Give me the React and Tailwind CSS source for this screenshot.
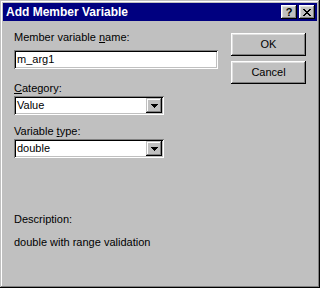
import React from "react";

const font = { fontFamily: '"Liberation Sans", Arial, sans-serif' };

function Combo({ value }) {
  return (
    <div className="relative flex h-[19px] w-[150px] items-center bg-white shadow-[inset_1px_1px_#808080,inset_-1px_-1px_#fff,inset_2px_2px_#000,inset_-2px_-2px_#c0c0c0]">
      <span className="pl-[3px] text-[11px] leading-[13px] text-black">{value}</span>
      <div className="absolute right-[2px] top-[2px] flex h-[15px] w-[16px] items-center justify-center bg-[#c0c0c0] shadow-[inset_-1px_-1px_#000,inset_1px_1px_#c0c0c0,inset_-2px_-2px_#808080,inset_2px_2px_#fff]">
        <svg width="7" height="4" viewBox="0 0 7 4" className="mt-[1px]">
          <path d="M0 0h7v1H0zM1 1h5v1H1zM2 2h3v1H2zM3 3h1v1H3z" fill="#000" />
        </svg>
      </div>
    </div>
  );
}

function Btn({ children }) {
  return (
    <div className="flex h-[23px] w-[75px] items-center justify-center bg-[#c0c0c0] text-[11px] text-black shadow-[inset_-1px_-1px_#000,inset_1px_1px_#fff,inset_-2px_-2px_#808080,inset_2px_2px_#dfdfdf]">
      {children}
    </div>
  );
}

export default function App() {
  return (
    <div
      style={font}
      className="flex h-[288px] w-[320px] flex-col bg-[#c0c0c0] p-[3px] shadow-[inset_-1px_-1px_#000,inset_1px_1px_#c0c0c0,inset_-2px_-2px_#808080,inset_2px_2px_#fff]"
    >
      <div className="flex h-[18px] items-center justify-between bg-[#000080] pl-[3px] pr-[2px]">
        <span className="text-[12px] font-bold leading-[13px] text-white">Add Member Variable</span>
        <div className="flex items-center">
          <div className="flex h-[14px] w-[16px] items-center justify-center bg-[#c0c0c0] shadow-[inset_-1px_-1px_#000,inset_1px_1px_#fff,inset_-2px_-2px_#808080,inset_2px_2px_#dfdfdf]">
            <span className="text-[11px] font-bold leading-[11px] text-black">?</span>
          </div>
          <div className="ml-[2px] flex h-[14px] w-[16px] items-center justify-center bg-[#c0c0c0] shadow-[inset_-1px_-1px_#000,inset_1px_1px_#fff,inset_-2px_-2px_#808080,inset_2px_2px_#dfdfdf]">
            <svg width="8" height="7" viewBox="0 0 8 7">
              <path d="M0 0h2v1H0zM6 0h2v1H6zM1 1h2v1H1zM5 1h2v1H5zM2 2h4v1H2zM3 3h2v1H3zM2 4h4v1H2zM1 5h2v1H1zM5 5h2v1H5zM0 6h2v1H0zM6 6h2v1H6z" fill="#000" />
            </svg>
          </div>
        </div>
      </div>
      <div className="flex flex-1 text-[11px] leading-[13px] text-black">
        <div className="ml-[11px] flex flex-col">
          <div className="mt-[10px]">Member variable <u>n</u>ame:</div>
          <div className="mt-[6px] flex h-[19px] w-[204px] items-center bg-white pl-[3px] shadow-[inset_1px_1px_#808080,inset_-1px_-1px_#fff,inset_2px_2px_#000,inset_-2px_-2px_#c0c0c0]">
            m_arg1
          </div>
          <div className="mt-[13px]"><u>C</u>ategory:</div>
          <div className="mt-[1px]"><Combo value="Value" /></div>
          <div className="mt-[10px]">Variable <u>t</u>ype:</div>
          <div className="mt-[1px]"><Combo value="double" /></div>
          <div className="mt-[55px]">Description:</div>
          <div className="mt-[10px]">double with range validation</div>
        </div>
        <div className="ml-[13px] mt-[12px] flex flex-col gap-[5px]">
          <Btn>OK</Btn>
          <Btn>Cancel</Btn>
        </div>
      </div>
    </div>
  );
}
